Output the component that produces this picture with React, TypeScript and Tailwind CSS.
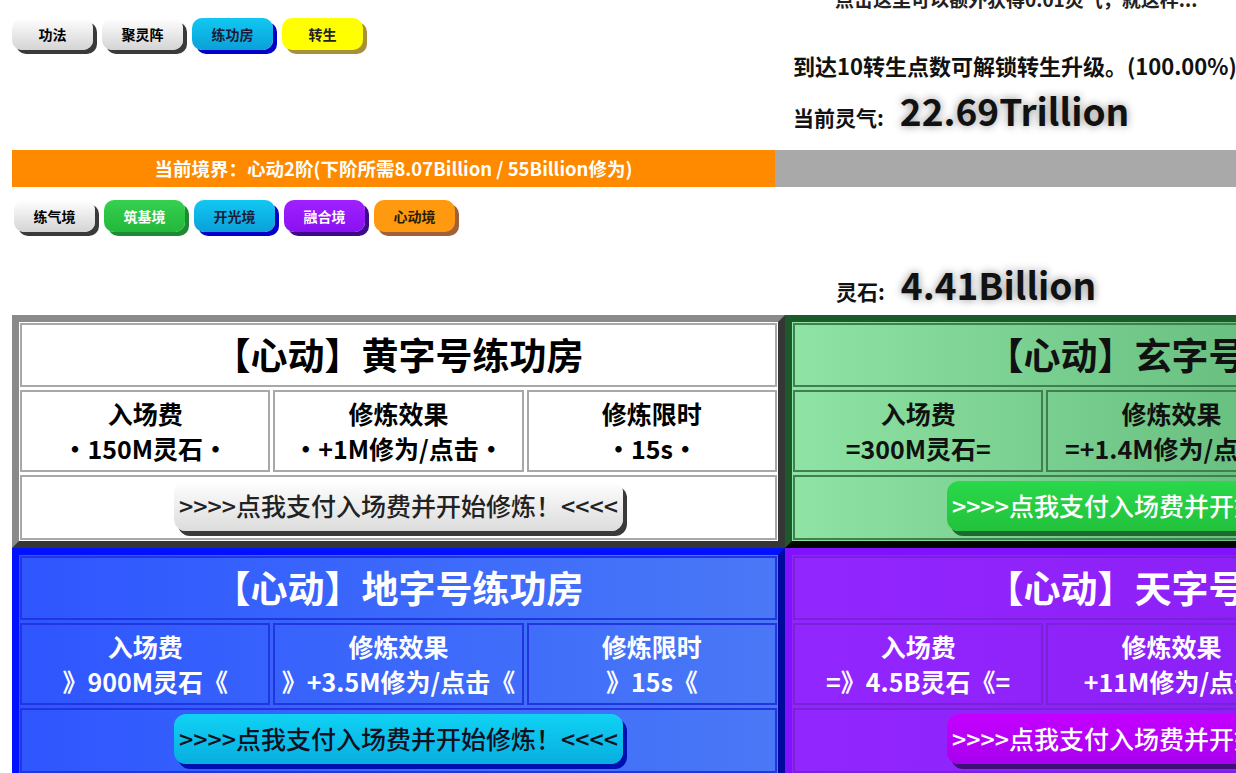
import React from 'react'

const font = "font-['Noto_Sans_CJK_SC',sans-serif]"

const navButtons = [
  { label: '功法', cls: 'bg-gradient-to-b from-white to-[#d4d4d4] text-black shadow-[4px_4px_0_#3a3a3a]' },
  { label: '聚灵阵', cls: 'bg-gradient-to-b from-white to-[#d4d4d4] text-black shadow-[4px_4px_0_#3a3a3a]' },
  { label: '练功房', cls: 'bg-gradient-to-b from-[#12c8f2] to-[#0aa0d8] text-[#1b1b3a] shadow-[4px_4px_0_#0000c8]' },
  { label: '转生', cls: 'bg-[#ffff00] text-[#222] shadow-[4px_4px_0_#a88f3a]' },
]

const realmButtons = [
  { label: '练气境', cls: 'bg-gradient-to-b from-white to-[#d4d4d4] text-black shadow-[4px_4px_0_#3a3a3a]' },
  { label: '筑基境', cls: 'bg-gradient-to-b from-[#36d050] to-[#22b83a] text-white shadow-[4px_4px_0_#1e8a34]' },
  { label: '开光境', cls: 'bg-gradient-to-b from-[#12c8f2] to-[#0aa0d8] text-[#1b1b3a] shadow-[4px_4px_0_#0000c8]' },
  { label: '融合境', cls: 'bg-gradient-to-b from-[#a020ff] to-[#8a10f0] text-white shadow-[4px_4px_0_#3c0a8a]' },
  { label: '心动境', cls: 'bg-[#ff9a10] text-[#2a1a00] shadow-[4px_4px_0_#a0603a]' },
]

const rooms = [
  {
    title: '【心动】黄字号练功房',
    fee: '·150M灵石·',
    effect: '·+1M修为/点击·',
    time: '·15s·',
    card: 'border-[#8a8a8a] bg-white text-black',
    cell: 'border-[#a8a8a8]',
    button: 'bg-gradient-to-b from-white to-[#dcdcdc] text-[#222] shadow-[4px_5px_0_#3a3a3a]',
  },
  {
    title: '【心动】玄字号练功房',
    fee: '=300M灵石=',
    effect: '=+1.4M修为/点击=',
    time: '=15s=',
    card: 'border-[#1c5a2c] bg-gradient-to-r from-[#8fe3a4] to-[#4da867] text-[#111]',
    cell: 'border-[#3f7f50]',
    button: 'bg-gradient-to-b from-[#2ad84a] to-[#22c23c] text-white shadow-[4px_5px_0_#1c6a2e]',
  },
  {
    title: '【心动】地字号练功房',
    fee: '》900M灵石《',
    effect: '》+3.5M修为/点击《',
    time: '》15s《',
    card: 'border-[#0010f0] bg-gradient-to-r from-[#2f55ff] to-[#4a78f6] text-white',
    cell: 'border-[#2236e0]',
    button: 'bg-gradient-to-b from-[#10d2f4] to-[#08aee0] text-[#101020] shadow-[4px_5px_0_#0010b0]',
  },
  {
    title: '【心动】天字号练功房',
    fee: '=》4.5B灵石《=',
    effect: '+11M修为/点击',
    time: '=》15s《=',
    card: 'border-[#7a10f0] bg-gradient-to-r from-[#9226ff] to-[#8a1cf0] text-white',
    cell: 'border-[#7a22d8]',
    button: 'bg-gradient-to-b from-[#c400ff] to-[#a800ee] text-white shadow-[4px_5px_0_#40107a]',
  },
]

function Pill({ label, cls }: { label: string; cls: string }) {
  return (
    <button className={`w-[81px] h-[32px] rounded-[10px] text-[14px] font-bold ${cls}`}>
      {label}
    </button>
  )
}

function Room({ room }: { room: any }) {
  return (
    <div className={`border-[7px] [border-style:outset] p-px ${room.card}`}>
      <div className="grid grid-cols-3 gap-[3px]">
        <div className={`col-span-3 h-[64px] border-2 ${room.cell} flex items-center justify-center text-[37px] font-bold`}>
          {room.title}
        </div>
        {[
          ['入场费', room.fee],
          ['修炼效果', room.effect],
          ['修炼限时', room.time],
        ].map(([k, v]) => (
          <div
            key={k}
            className={`h-[82px] border-2 ${room.cell} flex flex-col items-center justify-center text-[25px] font-bold leading-[1.4] whitespace-nowrap`}
          >
            <span>{k}</span>
            <span>{v}</span>
          </div>
        ))}
        <div className={`col-span-3 h-[65px] border-2 ${room.cell} flex items-center justify-center pb-[3px]`}>
          <button className={`h-[50px] px-[5px] rounded-[12px] text-[25px] font-medium whitespace-nowrap ${room.button}`}>
            {'>>>>点我支付入场费并开始修炼！<<<<'}
          </button>
        </div>
      </div>
    </div>
  )
}

export default function App() {
  return (
    <div className={`w-[1236px] h-[773px] overflow-hidden bg-white ${font}`}>
      <div className="w-[1570px] pl-3">
        {/* header */}
        <div className="flex h-[150px]">
          <div className="w-[773px] pt-[18px] flex gap-[9px] items-start">
            {navButtons.map((b) => (
              <Pill key={b.label} {...b} />
            ))}
          </div>
          <div className="pl-[8px] flex flex-col">
            <p className="-mt-[15px] pl-[42px] text-[19px] font-bold text-[#222] leading-[28px]">
              点击这里可以额外获得0.01灵气，就这样...
            </p>
            <p className="mt-[37px] text-[22px] font-bold text-[#111] leading-[30px] whitespace-nowrap">
              到达10转生点数可解锁转生升级。(100.00%)
            </p>
            <p className="mt-[8px] flex items-baseline gap-4 text-[#111] whitespace-nowrap">
              <span className="text-[21px] font-bold">当前灵气:</span>
              <span className="text-[37px] font-bold leading-[44px] [text-shadow:0_0_8px_rgba(0,0,0,0.45)]">
                22.69Trillion
              </span>
            </p>
          </div>
        </div>

        {/* progress */}
        <div className="w-[1550px] h-[37px] bg-[#a9a9a9]">
          <div className="w-[763px] h-full bg-[#ff8a00] flex items-center justify-center text-white text-[18.5px] font-bold whitespace-nowrap">
            当前境界：心动2阶(下阶所需8.07Billion / 55Billion修为)
          </div>
        </div>

        <div className="mt-[13px] pl-[2px] flex gap-[9px]">
          {realmButtons.map((b) => (
            <Pill key={b.label} {...b} />
          ))}
        </div>

        <div className="h-[83px] pl-[824px] flex items-end pb-[8px]">
          <p className="flex items-baseline gap-4 text-[#111] whitespace-nowrap">
            <span className="text-[21px] font-bold">灵石:</span>
            <span className="text-[37px] font-bold leading-[44px] [text-shadow:0_0_8px_rgba(0,0,0,0.45)]">
              4.41Billion
            </span>
          </p>
        </div>

        {/* rooms */}
        <div className="grid grid-cols-[773px_773px]">
          {rooms.map((r) => (
            <Room key={r.title} room={r} />
          ))}
        </div>
      </div>
    </div>
  )
}
